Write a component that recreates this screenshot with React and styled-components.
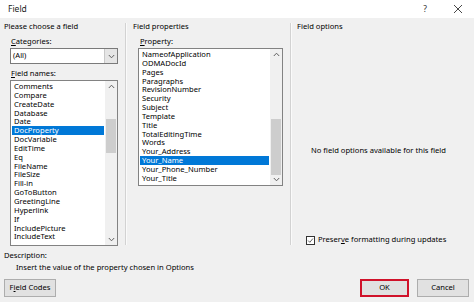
import React from 'react';
import styled, { createGlobalStyle } from 'styled-components';

const GlobalStyle = createGlobalStyle`
  html, body { margin: 0; padding: 0; background: #fff; }
  body { font-family: "Noto Sans", "Open Sans", sans-serif; color: #000; }
`;

const fieldNames = [
  'Comments', 'Compare', 'CreateDate', 'Database', 'Date', 'DocProperty',
  'DocVariable', 'EditTime', 'Eq', 'FileName', 'FileSize', 'Fill-in',
  'GoToButton', 'GreetingLine', 'Hyperlink', 'If', 'IncludePicture', 'IncludeText',
];

const properties = [
  'NameofApplication', 'ODMADocId', 'Pages', 'Paragraphs', 'RevisionNumber',
  'Security', 'Subject', 'Template', 'Title', 'TotalEditingTime', 'Words',
  'Your_Address', 'Your_Name', 'Your_Phone_Number', 'Your_Title',
];

const Chevron = ({ up }) => (
  <svg width="7" height="5" viewBox="0 0 7 5">
    <path
      d={up ? 'M0.8 4 L3.5 1.2 L6.2 4' : 'M0.8 1 L3.5 3.8 L6.2 1'}
      fill="none"
      stroke="#606060"
      strokeWidth="1"
    />
  </svg>
);

const Scroll = ({ thumbTop, thumbHeight }) => (
  <ScrollBar>
    <ScrollArrow><Chevron up /></ScrollArrow>
    <Track>
      <Thumb style={{ top: thumbTop, height: thumbHeight }} />
    </Track>
    <ScrollArrow><Chevron /></ScrollArrow>
  </ScrollBar>
);

const App = () => {
  return (
    <>
      <GlobalStyle />
      <Window>
        <TitleBar>
          <Title>Field</Title>
          <TitleButtons>
            <HelpGlyph>?</HelpGlyph>
            <svg width="10" height="10" viewBox="0 0 10 10">
              <path d="M1 1 L9 9 M9 1 L1 9" stroke="#333" strokeWidth="0.9" />
            </svg>
          </TitleButtons>
        </TitleBar>
        <Body>
          <Groups>
            <Group $width={121} $pad={6}>
              <Legend $indent={-6}>Please choose a field</Legend>
              <Label><u>C</u>ategories:</Label>
              <Combo>
                <ComboText>(All)</ComboText>
                <ComboButton><Chevron /></ComboButton>
              </Combo>
              <Label $top={5}><u>F</u>ield names:</Label>
              <ListBox $height={166} $width={108}>
                <Items>
                  {fieldNames.map((n) => (
                    <Item key={n} $selected={n === 'DocProperty'}>{n}</Item>
                  ))}
                </Items>
                <Scroll thumbTop={27} thumbHeight={34} />
              </ListBox>
            </Group>
            <Divider />
            <Group $width={163} $pad={11}>
              <Legend $indent={-5}>Field properties</Legend>
              <Label $left={2}><u>P</u>roperty:</Label>
              <ListBox $height={138} $width={145}>
                <Items>
                  {properties.map((n) => (
                    <Item key={n} $selected={n === 'Your_Name'}>{n}</Item>
                  ))}
                </Items>
                <Scroll thumbTop={59} thumbHeight={56} />
              </ListBox>
            </Group>
            <Divider />
            <Options>
              <Legend $indent={0}>Field options</Legend>
              <Empty>No field options available for this field</Empty>
              <CheckRow>
                <CheckBox>
                  <svg width="9" height="9" viewBox="0 0 9 9">
                    <path d="M1.5 4.6 L3.6 6.8 L7.6 2" fill="none" stroke="#333" strokeWidth="1" />
                  </svg>
                </CheckBox>
                <span>Preser<u>v</u>e formatting during updates</span>
              </CheckRow>
            </Options>
          </Groups>
          <Description>
            <div>Description:</div>
            <DescText>Insert the value of the property chosen in Options</DescText>
          </Description>
          <Footer>
            <Button $width={52}>F<u>i</u>eld Codes</Button>
            <Spacer />
            <Button $width={49} $primary>OK</Button>
            <Button $width={52}>Cancel</Button>
          </Footer>
        </Body>
      </Window>
    </>
  );
};

export default App;

const Window = styled.div`
  width: 474px;
  height: 302px;
  overflow: hidden;
  display: flex;
  flex-direction: column;
  font-size: 7.6px;
  line-height: 1;
`;

const TitleBar = styled.div`
  height: 18px;
  flex: none;
  background: #fff;
  display: flex;
  align-items: center;
  padding: 0 8px;
`;

const Title = styled.div`
  font-size: 8.5px;
  color: #222;
  flex: 1;
`;

const TitleButtons = styled.div`
  display: flex;
  align-items: center;
  gap: 26px;
  margin-right: 3px;
`;

const HelpGlyph = styled.span`
  font-size: 8.5px;
  color: #333;
`;

const Body = styled.div`
  flex: 1;
  background: #f0f0f0;
  display: flex;
  flex-direction: column;
`;

const Groups = styled.div`
  display: flex;
  height: 229px;
  padding-top: 5px;
  padding-left: 4px;
  box-sizing: border-box;
`;

const Group = styled.div`
  width: ${(p) => p.$width}px;
  flex: none;
  display: flex;
  flex-direction: column;
  padding-left: ${(p) => p.$pad}px;
  box-sizing: border-box;
`;

const Legend = styled.div`
  height: 10px;
  margin-left: ${(p) => p.$indent}px;
  margin-bottom: 4px;
  white-space: nowrap;
`;

const Label = styled.div`
  height: 10px;
  margin-top: ${(p) => p.$top || 0}px;
  margin-left: ${(p) => p.$left || 1}px;
  display: flex;
  align-items: center;
`;

const Combo = styled.div`
  width: 108px;
  height: 16px;
  margin-top: 1px;
  box-sizing: border-box;
  border: 1px solid #7a7a7a;
  background: #fff;
  display: flex;
  align-items: center;
`;

const ComboText = styled.div`
  flex: 1;
  padding-left: 2px;
`;

const ComboButton = styled.div`
  width: 12px;
  height: 14px;
  background: #e5e5e5;
  border-left: 1px solid #c8c8c8;
  display: flex;
  align-items: center;
  justify-content: center;
`;

const ListBox = styled.div`
  width: ${(p) => p.$width}px;
  height: ${(p) => p.$height}px;
  margin-top: 1px;
  box-sizing: border-box;
  border: 1px solid #828282;
  background: #fff;
  display: flex;
`;

const Items = styled.div`
  flex: 1;
  padding: 1px 1px 0;
  overflow: hidden;
`;

const Item = styled.div`
  height: 8.85px;
  line-height: 8.85px;
  padding-left: 2px;
  white-space: nowrap;
  background: ${(p) => (p.$selected ? '#0078d7' : 'transparent')};
  color: ${(p) => (p.$selected ? '#fff' : '#000')};
`;

const ScrollBar = styled.div`
  width: 12px;
  flex: none;
  background: #f0f0f0;
  display: flex;
  flex-direction: column;
`;

const ScrollArrow = styled.div`
  height: 11px;
  display: flex;
  align-items: center;
  justify-content: center;
`;

const Track = styled.div`
  flex: 1;
  position: relative;
`;

const Thumb = styled.div`
  position: absolute;
  left: 1px;
  right: 1px;
  background: #cdcdcd;
`;

const Divider = styled.div`
  width: 1px;
  flex: none;
  margin-bottom: 2px;
  background: #d2d2d2;
  border-right: 1px solid #fafafa;
`;

const Options = styled.div`
  flex: 1;
  display: flex;
  flex-direction: column;
  padding-left: 5px;
`;

const Empty = styled.div`
  margin-top: 110px;
  padding-right: 14px;
  text-align: center;
`;

const CheckRow = styled.div`
  margin-top: 81px;
  margin-left: 9px;
  display: flex;
  align-items: center;
  gap: 3px;
`;

const CheckBox = styled.div`
  width: 9px;
  height: 9px;
  box-sizing: border-box;
  border: 1px solid #333;
  background: #fff;
  display: flex;
  align-items: center;
  justify-content: center;
`;

const Description = styled.div`
  padding: 5px 0 0 4px;
  display: flex;
  flex-direction: column;
  gap: 4px;
`;

const DescText = styled.div`
  padding-left: 12px;
`;

const Footer = styled.div`
  display: flex;
  align-items: center;
  gap: 8px;
  padding: 0 5px 0 4px;
  margin-top: 8px;
`;

const Spacer = styled.div`
  flex: 1;
`;

const Button = styled.div`
  width: ${(p) => p.$width}px;
  height: 18px;
  box-sizing: border-box;
  background: #e1e1e1;
  border: ${(p) => (p.$primary ? '2px solid #d0122a' : '1px solid #adadad')};
  display: flex;
  align-items: center;
  justify-content: center;
`;
